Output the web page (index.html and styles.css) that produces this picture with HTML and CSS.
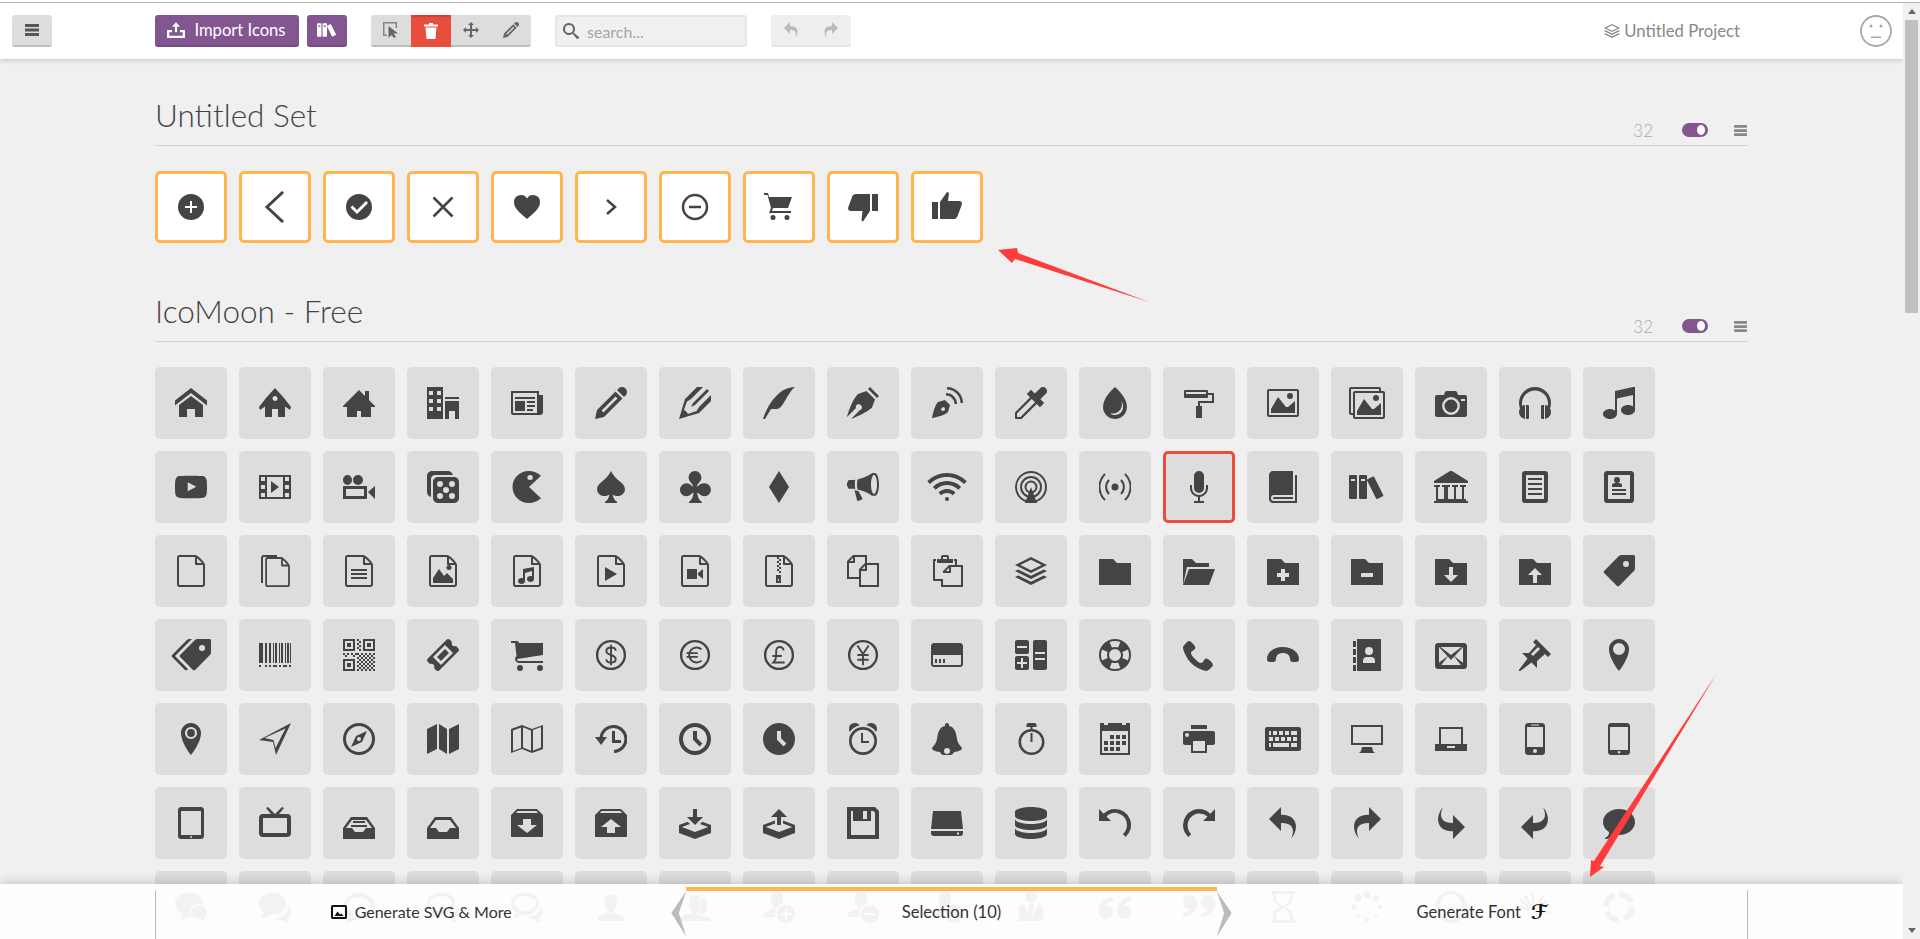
FILE: index.html
```html
<!DOCTYPE html>
<html lang="en">
<head>
<meta charset="utf-8">
<title>IcoMoon App</title>
<link rel="stylesheet" href="styles.css">
</head>
<body>
<svg class="sprite" aria-hidden="true">
<defs>
<path id="fbp" d="M28.7 7.2c-.7-1-1.7-2-2.700-3.100s-2.200-2-3.200-2.800C21.200.1 20.400 0 20 0H4.500C3.100 0 2 1.100 2 2.500v27C2 30.900 3.100 32 4.500 32h23c1.400 0 2.500-1.100 2.500-2.500V10c0-.4-.1-1.200-1.300-2.800zM24.500 5.500c1 1 1.700 1.800 2.300 2.500H22V3.200c.7.600 1.600 1.300 2.500 2.300zM28 29.500c0 .3-.2.500-.5.500h-23c-.3 0-.5-.2-.5-.5v-27c0-.3.2-.5.500-.5H20v7c0 .6.400 1 1 1h7z"/>
<path id="fop" d="M18 8l-4-4H0v26h32V8z"/>
<path id="u2" d="M23.800 32c3.600-6.400 4.200-16.300-9.800-15.900V24L2 12 14 0v7.800C30.700 7.300 32.600 22.500 23.800 32z"/>
<path id="r2" d="M18 7.800V0l12 12-12 12v-7.900C4 15.800 4.600 25.600 8.200 32-.6 22.500 1.300 7.300 18 7.800z"/>
<path id="bu" d="M16 2c8.800 0 16 5.800 16 13s-7.200 13-16 13c-.8 0-1.700 0-2.500-.2C10 31 6 31.800 2 32v-1c2.200-1 4-3 4-5v-1C2.400 22.700 0 19 0 15 0 7.800 7.200 2 16 2z"/>
<path id="ub" d="M12 23c0-4.700 3-8.800 7.200-10.300.5-1.100.8-2.400.8-3.700 0-5 0-9-6-9S8 4 8 9c0 3.100 1.800 6.200 4 7.400v1.700C5.200 18.600 0 22 0 26h12.400c-.3-1-.4-2-.4-3zM23 14a9 9 0 100 18 9 9 0 000-18z"/>
<path id="rg" d="M16 0a16 16 0 100 32 16 16 0 000-32zM16 29.500a13.500 13.500 0 110-27 13.500 13.500 0 010 27z"/>
</defs>

<symbol id="home" viewBox="0 0 32 32"><path d="M32 18.500L16 6 0 18.500v-5L16 1l16 12.400zM28 18v12h-8v-8h-8v8H4V18l12-9z"/></symbol>
<symbol id="home2" viewBox="0 0 32 32"><path d="M16 1L7 11 0 20l1 3 5-3.500V30h7v-8h6v8h7V19.500l5 3.500 1-3-7-9zM16 9a2.500 2.500 0 110 5 2.500 2.500 0 010-5z"/></symbol>
<symbol id="home3" viewBox="0 0 32 32"><path d="M32 19l-6-6V4h-4v5l-6-6L0 19v1h4v10h10v-6h4v6h10V20h4z"/></symbol>
<symbol id="office" viewBox="0 0 32 32"><path d="M0 32h16V0H0zM10 4h4v4h-4zM10 12h4v4h-4zM10 20h4v4h-4zM2 4h4v4H2zM2 12h4v4H2zM2 20h4v4H2zM18 10h14v2H18zM18 32h4v-8h6v8h4V14H18z"/></symbol>
<symbol id="news" viewBox="0 0 32 32"><path d="M28 8V4H0v22c0 1.100.9 2 2 2h27c1.700 0 3-1.300 3-3V8zM26 26H2V6h24zM4 10h20v2H4zM16 14h8v2h-8zM16 18h8v2h-8zM16 22h6v2h-6zM4 14h10v10H4z"/></symbol>
<symbol id="pen1" viewBox="0 0 32 32"><path d="M27 0a5 5 0 015 5c0 1.100-.4 2.200-1 3l-2 2-7-7 2-2c.8-.6 1.900-1 3-1zM2 23L0 32l9-2 18.500-18.500-7-7zM22.400 11.400l-14 14-1.800-1.800 14-14z"/></symbol>
<symbol id="pen2" viewBox="0 0 32 32"><path d="M12 20l4-2L30 4l-2-2-14 14zM9 27.100c-1-2.100-2-3.100-4.100-4.100L8 14.400l4-2.400L24 0h-6L6 12 0 32l20-6 12-12V8L20 20l-2.400 4z"/></symbol>
<symbol id="quill" viewBox="0 0 32 32"><path d="M0 32C4 20 14.500 0 32 0c-8.200 6.600-12 22-18 22H8L2 32z"/></symbol>
<symbol id="pen" viewBox="0 0 32 32"><path d="M23 0l9 9-2 2-9-9zM19.500 4l8.500 8.500-3 8C20 26 4 32 4 32l9-9a3 3 0 10-4-2l-9 9S4 14 11 7z"/></symbol>
<symbol id="blog" viewBox="0 0 32 32"><path d="M1 31S3 19 7 15l7-2 5 5-2 7c-4 4-16 6-16 6zM5 27l5-5a2 2 0 102-2zM16 0v2.500A13.500 13.500 0 0129.500 16H32A16 16 0 0016 0zM15 6v2.500A8.500 8.500 0 0123.500 17H26A11 11 0 0015 6z"/></symbol>
<symbol id="eye" viewBox="0 0 32 32"><path d="M30.800 1.200a4 4 0 00-5.600 0l-5.400 5.400L16 2.800l-4.200 4.200 3.300 3.300L.3 25.100c-.2.200-.3.600-.3.900v5c0 .6.400 1 1 1h5.100c.3 0 .6-.1.800-.3l14.800-14.800 3.300 3.300 4.200-4.200-3.800-3.800 5.400-5.400a4 4 0 000-5.600zM5.400 30H2v-3.400l14.700-14.700 3.400 3.400z"/></symbol>
<symbol id="droplet" viewBox="0 0 32 32"><path d="M27 14.800C25 9 20.600 3.900 16 0 11.400 3.900 7 9 5 14.800c-1.300 3.500-1.400 7.400.4 10.800C7.400 29.500 11.600 32 16 32s8.600-2.500 10.600-6.400c1.800-3.400 1.700-7.300.4-10.800zM23.100 23.700C21.700 26.300 19 28 16 28c-1.700 0-3.400-.6-4.700-1.600 5 .8 9.800-2 11.100-6 .8-2.500.6-5 0-7 1.800 3.400 2.400 7 .7 10.300z"/></symbol>
<symbol id="paint" viewBox="0 0 32 32"><path d="M2 3h22a1 1 0 011 1v2h6v10H17v3h2v12h-6V19h2v-5h14V8h-4v2a1 1 0 01-1 1H2a1 1 0 01-1-1V4a1 1 0 011-1zM3 5v2h20V5z"/></symbol>
<symbol id="image" viewBox="0 0 32 32"><path d="M30 2H2C.9 2 0 2.900 0 4v24c0 1.100.9 2 2 2h28c1.100 0 2-.9 2-2V4c0-1.100-.9-2-2-2zM30 28H2V4h28zM26 9a3 3 0 11-6 0 3 3 0 016 0zM28 26H4v-4l7-12 8 10h2l7-6z"/></symbol>
<symbol id="images" viewBox="0 0 36 32"><path d="M34 4h-2V2c0-1.100-.9-2-2-2H2C.9 0 0 .9 0 2v24c0 1.100.9 2 2 2h2v2c0 1.100.9 2 2 2h28c1.100 0 2-.9 2-2V6c0-1.100-.9-2-2-2zM4 6v20H2V2h28v2H6C4.900 4 4 4.900 4 6zM34 30H6V6h28zM30 11a3 3 0 11-6 0 3 3 0 016 0zM32 28H8v-4l7-12 8 10h2l7-6z"/></symbol>
<symbol id="camera" viewBox="0 0 32 32"><path d="M9.500 19a6.500 6.500 0 1013 0 6.500 6.500 0 00-13 0zM30 8h-7c-.5-2-1-4-3-4h-8c-2 0-2.500 2-3 4H2c-1.100 0-2 .9-2 2v18c0 1.100.9 2 2 2h28c1.100 0 2-.9 2-2V10c0-1.100-.9-2-2-2zM16 27.900a8.900 8.900 0 110-17.800 8.900 8.900 0 010 17.800zM30 14h-4v-2h4z"/></symbol>
<symbol id="phones" viewBox="0 0 32 32"><path d="M9 18H7v14h2c.5 0 1-.5 1-1V19c0-.5-.5-1-1-1zM23 18c-.5 0-1 .5-1 1v12c0 .5.500 1 1 1h2V18zM32 16a16 16 0 00-32 0c0 1.900.3 3.800 1 5.500-.6 1-1 2.200-1 3.500 0 3.500 2.600 6.400 6 6.900V18.100c-1 .1-1.900.5-2.700 1-.2-.8-.3-1.700-.3-2.600a13 13 0 0126 0c0 .9-.1 1.800-.3 2.600-.8-.5-1.700-.9-2.700-1v13.800c3.400-.5 6-3.400 6-6.900 0-1.300-.3-2.500-1-3.500.6-1.700 1-3.600 1-5.500z"/></symbol>
<symbol id="music" viewBox="0 0 32 32"><path d="M30 0h2v23c0 2.800-3.100 5-7 5s-7-2.200-7-5 3.100-5 7-5c2 0 3.700.6 5 1.500V8l-16 3.600V27c0 2.800-3.100 5-7 5s-7-2.200-7-5 3.100-5 7-5c2 0 3.700.6 5 1.500V4z"/></symbol>

<symbol id="play" viewBox="0 0 32 32"><path d="M31.700 9.600s-.3-2.200-1.300-3.200c-1.200-1.300-2.600-1.300-3.200-1.300C22.700 4.700 16 4.700 16 4.700s-6.700 0-11.200.4c-.6 0-2 0-3.200 1.300C.6 7.400.3 9.600.3 9.600S0 12.200 0 14.800v2.400c0 2.600.3 5.200.3 5.200s.3 2.200 1.300 3.200c1.200 1.300 2.800 1.200 3.500 1.400 2.600.2 10.900.3 10.900.3s6.700 0 11.200-.3c.6-.1 2-.1 3.200-1.400 1-1 1.300-3.200 1.300-3.200s.3-2.600.3-5.200v-2.400c0-2.600-.3-5.200-.3-5.200zM12.700 20.200v-9l8.600 4.500z"/></symbol>
<symbol id="film" viewBox="0 0 32 32"><path d="M0 4v24h32V4zM6 26H2v-4h4zM6 18H2v-4h4zM6 10H2V6h4zM24 26H8V6h16zM30 26h-4v-4h4zM30 18h-4v-4h4zM30 10h-4V6h4zM12 10v12l8-6z"/></symbol>
<symbol id="video" viewBox="0 0 32 32"><path d="M4.500 4a4.500 5 0 110 10 4.500 5 0 010-10zM15 4a5 5 0 110 10 5 5 0 010-10zM0 15h24v13H0zM3 18v7h18v-7zM25 21l7-6v13z"/></symbol>
<symbol id="dice" viewBox="0 0 32 32"><path d="M27 6H11c-2.800 0-5 2.200-5 5v16c0 2.800 2.200 5 5 5h16c2.800 0 5-2.200 5-5V11c0-2.800-2.200-5-5-5zM13 28a3 3 0 110-6 3 3 0 010 6zM13 16a3 3 0 110-6 3 3 0 010 6zM19 22a3 3 0 110-6 3 3 0 010 6zM25 28a3 3 0 110-6 3 3 0 010 6zM25 16a3 3 0 110-6 3 3 0 010 6zM25.900 4c-.5-2.300-2.500-4-4.900-4H5C2.200 0 0 2.200 0 5v16c0 2.400 1.700 4.400 4 4.900V8c0-2.200 1.800-4 4-4z"/></symbol>
<symbol id="pac" viewBox="0 0 32 32"><path transform="translate(1.500) scale(1.100 1)" d="M25.900 4.700C23 1.800 19 0 14.700 0 6.600 0 0 7.200 0 16s6.600 16 14.700 16c4.300 0 8.300-1.800 11.200-4.700L15 16zM16 4a2.500 2.500 0 110 5 2.500 2.500 0 010-5z"/></symbol>
<symbol id="spade" viewBox="0 0 32 32"><path d="M25.500 10.900C19.500 6.400 17.400 2.800 16 0c-1.400 2.800-3.500 6.400-9.500 10.900-10.300 7.700-.6 18.400 7.900 12.500-.5 3.600-2.400 6.300-4.400 7.400V32h12v-1.200c-1.900-1.100-3.800-3.800-4.400-7.400 8.500 5.900 18.200-4.800 7.900-12.500z"/></symbol>
<symbol id="club" viewBox="0 0 32 32"><path d="M24.600 12.300c-1.800 0-3.500.8-4.700 2-.5.500-1.400 1.200-2.300 1.700.4-1.700 1.800-3.800 2.800-4.700 1.200-1.200 2-2.900 2-4.700C22.400 2.900 19.500 0 16 0s-6.400 2.900-6.400 6.500c0 1.900.8 3.500 2 4.700 1 .9 2.400 3.100 2.800 4.700-.9-.5-1.800-1.200-2.300-1.700-1.200-1.300-2.900-2-4.700-2C3.800 12.300 1 15.200 1 18.800s2.800 6.500 6.400 6.500c1.800 0 3.500-.8 4.700-2 .5-.6 1.500-1.300 2.400-1.800-.1 4.600-2.300 8-4.500 9.300V32h12.800v-1.200c-2.200-1.300-4.400-4.700-4.500-9.300 1 .6 1.900 1.300 2.400 1.800 1.200 1.300 2.900 2 4.700 2 3.600 0 6.500-2.900 6.500-6.500s-2.900-6.500-6.500-6.500z"/></symbol>
<symbol id="diamond" viewBox="0 0 32 32"><path d="M16 0L6 16l10 16 10-16z"/></symbol>
<symbol id="horn" viewBox="0 0 32 32"><path d="M27.900 2h-2.600S19.200 6.600 10.500 8.400C10.200 9.800 10 11.500 10 13.400s.2 3.600.5 5c8.700 1.800 14.800 6.400 14.800 6.400h2.600c2.300 0 4.100-5.100 4.100-11.400S30.200 2 27.900 2zM27 23.100c-.3 0-.6-.3-.8-.5-.4-.4-.8-1.100-1.100-2-.7-1.900-1.100-4.500-1.100-7.200s.4-5.300 1.100-7.200c.3-.9.700-1.500 1.100-2 .2-.2.500-.5.800-.5s.6.300.8.500c.4.400.8 1.100 1.100 2 .7 1.900 1.100 4.500 1.100 7.200s-.4 5.300-1.100 7.200c-.3.900-.7 1.500-1.100 2-.2.200-.5.500-.8.500zM7.900 13.400c0-1.600.1-3.200.3-4.700-1.500.2-2.800.4-4.400.4H1.700L0 12v2.800l1.700 3h2.100c1.600 0 2.900.1 4.400.3-.2-1.500-.3-3-.3-4.700zM11.500 20.100l-4-.8 2.600 10c.1.500.6.800 1.100.6l3.700-1.500c.5-.2.700-.7.400-1.200z"/></symbol>
<symbol id="wifi" viewBox="0 0 40 32"><path d="M20 18c3.300 0 6.300 1.300 8.500 3.500l-2.800 2.800c-1.400-1.400-3.400-2.300-5.700-2.300s-4.200.9-5.700 2.300l-2.800-2.800c2.200-2.200 5.200-3.500 8.500-3.500zM5.900 15.900C9.600 12.100 14.700 10 20 10s10.400 2.100 14.100 5.900l-2.800 2.800C28.300 15.700 24.300 14 20 14s-8.300 1.700-11.300 4.700zM30.900 4.200c3.300 1.400 6.300 3.400 8.900 6l-2.800 2.800C32.400 8.500 26.400 6 20 6S7.600 8.500 3 13L.2 10.200c2.600-2.600 5.600-4.600 8.900-6C12.600 2.700 16.200 2 20 2s7.400.7 10.900 2.200zM18 28a2 2 0 114 0 2 2 0 01-4 0z"/></symbol>
<symbol id="pod" viewBox="0 0 32 32"><g fill="none" stroke="currentColor" stroke-width="2"><circle cx="16" cy="16" r="15"/><circle cx="16" cy="16" r="10"/><circle cx="16" cy="16" r="5.500"/></g><path d="M16 16l-6 16h12z"/></symbol>
<symbol id="feed" viewBox="0 0 32 32"><circle cx="16" cy="16" r="3.500"/><path fill="none" stroke="currentColor" stroke-width="2" d="M10 9a10 10 0 000 14M22 9a10 10 0 010 14M6 3a18 18 0 000 26M26 3a18 18 0 010 26"/></symbol>
<symbol id="mic" viewBox="0 0 32 32"><path transform="translate(1)" d="M15 22a5 5 0 005-5V5a5 5 0 00-10 0v12a5 5 0 005 5zM22 14v3a7 7 0 01-14 0v-3H6v3c0 4.600 3.500 8.400 8 8.900V30h-4v2h10v-2h-4v-4.100c4.500-.5 8-4.300 8-8.900v-3z"/></symbol>
<symbol id="book" viewBox="0 0 32 32"><path d="M28 4v26H7a3 3 0 010-6h19V0H6C3.800 0 2 1.800 2 4v24c0 2.200 1.800 4 4 4h24V4zM7 26a1 1 0 000 2h19v-2z"/></symbol>
<symbol id="books" viewBox="0 0 36 32"><path d="M7 4H1c-.5 0-1 .5-1 1v22c0 .5.5 1 1 1h6c.5 0 1-.5 1-1V5c0-.5-.5-1-1-1zM6 10H2V8h4zM17 4h-6c-.5 0-1 .5-1 1v22c0 .5.500 1 1 1h6c.5 0 1-.5 1-1V5c0-.5-.5-1-1-1zM16 10h-4V8h4zM23.900 5.500l-5.400 2.700c-.5.300-.7.900-.4 1.400l9 17.900c.3.500.9.700 1.300.4l5.400-2.700c.5-.2.700-.9.400-1.300l-9-17.900c-.2-.5-.8-.7-1.300-.5z"/></symbol>
<symbol id="lib" viewBox="0 0 34 32"><path d="M32 30v-2h-2V16h2v-2h-6v2h2v12h-6V16h2v-2h-6v2h2v12h-6V16h2v-2H8v2h2v12H4V16h2v-2H0v2h2v12H2v2H0v2h34v-2zM16 0h2l16 10v2H0v-2z"/></symbol>
<symbol id="ftext" viewBox="0 0 32 32"><path d="M6 0h20a3 3 0 013 3v26a3 3 0 01-3 3H6a3 3 0 01-3-3V3a3 3 0 013-3zM7 4v24h18V4zM9 7h14v2H9zM9 12h14v2H9zM9 17h14v2H9zM9 22h14v2H9z"/></symbol>
<symbol id="profile" viewBox="0 0 32 32"><path transform="translate(1)" d="M27 0H3C1.400 0 0 1.400 0 3v26c0 1.700 1.400 3 3 3h24c1.700 0 3-1.300 3-3V3c0-1.600-1.300-3-3-3zM26 28H4V4h22zM8 18h14v2H8zM8 22h14v2H8zM10 9a3 3 0 116 0 3 3 0 01-6 0zM15 12h-4c-1.700 0-3 .9-3 2v2h10v-2c0-1.100-1.400-2-3-2z"/></symbol>

<symbol id="fe" viewBox="0 0 32 32"><use href="#fbp"/></symbol>
<symbol id="fes" viewBox="0 0 32 32"><use href="#fbp" transform="translate(4.500 2) scale(.88 .94)"/><path d="M2 28V3a3 3 0 013-3h13v2H5a1 1 0 00-1 1v25z"/></symbol>
<symbol id="ft" viewBox="0 0 32 32"><use href="#fbp"/><path d="M8 14h16v2H8zM8 18h16v2H8zM8 22h16v2H8z"/></symbol>
<symbol id="fp" viewBox="0 0 32 32"><use href="#fbp"/><path d="M6 28v-5l6-9 5 7 3-3 6 6v4zM22 10a2.500 2.500 0 110 5 2.500 2.500 0 010-5z"/></symbol>
<symbol id="fm" viewBox="0 0 32 32"><use href="#fbp"/><path d="M23 12v12c0 1.700-1.500 3-3.500 3S16 25.700 16 24s1.500-3 3.500-3c.5 0 1 .1 1.500.2V16l-7 2v8c0 1.700-1.500 3-3.500 3S7 27.700 7 26s1.500-3 3.500-3c.5 0 1 .1 1.500.2V14z"/></symbol>
<symbol id="fpl" viewBox="0 0 32 32"><use href="#fbp"/><path d="M10 12l12 7-12 7z"/></symbol>
<symbol id="fv" viewBox="0 0 32 32"><use href="#fbp"/><path d="M8 14h10v10H8zM19 18l5-4v10l-5-4z"/></symbol>
<symbol id="fz" viewBox="0 0 32 32"><use href="#fbp"/><path d="M14 2h2v2h-2zM16 4h2v2h-2zM14 6h2v2h-2zM16 8h2v2h-2zM14 10h2v2h-2zM16 12h2v2h-2zM14 14h2v2h-2zM16 16h2v2h-2zM13 20h5v8h-5zM15 24v2h1v-2z"/></symbol>
<symbol id="copy" viewBox="0 0 32 32"><path d="M20 8V0H6L0 6v18h12v8h20V8zM6 2.800V6H2.800zM2 22V8h6V2h10v6l-6 6v8zM18 10.800V14h-3.200zM30 30H14V16h6v-6h10z"/></symbol>
<symbol id="paste" viewBox="0 0 32 32"><path d="M22 4h-4V2c0-1.100-.9-2-2-2h-4c-1.100 0-2 .9-2 2v2H6v4h16zM16 4h-4V2h4zM26 10V5c0-.5-.5-1-1-1h-2v2h1v4h-6l-6 6v8H4V6h1V4H3c-.5 0-1 .5-1 1v20c0 .5.500 1 1 1h7v6h22V10zM18 12.800V16h-3.200zM30 30H12V18h8v-6h10z"/></symbol>
<symbol id="stack" viewBox="0 0 32 32"><path d="M32 10L16 2 0 10l16 8zM16 4.700L26.700 10 16 15.300 5.300 10zM28.800 14.400L32 16l-16 8L0 16l3.200-1.600L16 20.800zM28.800 20.400L32 22l-16 8L0 22l3.200-1.600L16 26.800z"/></symbol>
<symbol id="fo" viewBox="0 0 32 32"><path d="M14 4l4 4h14v22H0V4z"/></symbol>
<symbol id="foo" viewBox="0 0 32 32"><path d="M26 30l6-16H6L0 30zM4 12L0 30V4h9l4 4h13v4z"/></symbol>
<symbol id="fop2" viewBox="0 0 32 32"><use href="#fop"/><path fill="#ddd" d="M22 22h-4v4h-4v-4h-4v-4h4v-4h4v4h4z"/></symbol>
<symbol id="fom" viewBox="0 0 32 32"><use href="#fop"/><path fill="#ddd" d="M22 22H10v-4h12z"/></symbol>
<symbol id="fod" viewBox="0 0 32 32"><use href="#fop"/><path fill="#ddd" d="M16 27l-7-7h5v-8h4v8h5z"/></symbol>
<symbol id="fou" viewBox="0 0 32 32"><use href="#fop"/><path fill="#ddd" d="M16 13l7 7h-5v8h-4v-8H9z"/></symbol>
<symbol id="tag" viewBox="0 0 32 32"><path d="M30.500 0h-12c-.8 0-2 .5-2.600 1.100L1.100 15.900c-.6.600-.6 1.500 0 2.100L14 30.900c.6.600 1.500.6 2.100 0l14.800-14.800c.6-.6 1.100-1.700 1.100-2.600v-12c0-.8-.7-1.500-1.500-1.500zM23 12a3 3 0 110-6 3 3 0 010 6z"/></symbol>

<symbol id="tags" viewBox="0 0 40 32"><path d="M38.500 0h-12c-.8 0-2 .5-2.600 1.100L9.100 15.900c-.6.600-.6 1.500 0 2.100L22 30.900c.6.600 1.500.6 2.100 0l14.800-14.800c.6-.6 1.100-1.700 1.100-2.600v-12c0-.8-.7-1.500-1.500-1.500zM31 12a3 3 0 110-6 3 3 0 010 6zM4 17L21 0h-2.500c-.8 0-2 .5-2.600 1.100L1.100 15.900c-.6.600-.6 1.500 0 2.100L14 30.900c.6.600 1.500.6 2.100 0l.9-.9z"/></symbol>
<symbol id="bar" viewBox="0 0 32 32"><path d="M0 4h4v20H0zM6 4h2v20H6zM10 4h2v20h-2zM14 4h1v20h-1zM16 4h2v20h-2zM20 4h1v20h-1zM22 4h2v20h-2zM26 4h1v20h-1zM28 4h2v20h-2zM31 4h1v20h-1zM0 26h2v2H0zM6 26h2v2H6zM10 26h2v2h-2zM14 26h4v2h-4zM20 26h2v2h-2zM24 26h4v2h-4zM30 26h2v2h-2z"/></symbol>
<symbol id="qrc" viewBox="0 0 32 32"><path d="M0 0h12v12H0zM2 2v8h8V2zM4 4h4v4H4zM20 0h12v12H20zM22 2v8h8V2zM24 4h4v4h-4zM0 20h12v12H0zM2 22v8h8v-8zM4 24h4v4H4zM14 0h2v2h-2zM16 2h2v2h-2zM14 4h2v2h-2zM16 6h2v2h-2zM14 8h2v2h-2zM16 10h2v2h-2zM14 14h2v2h-2zM14 18h2v2h-2zM16 16h2v2h-2zM16 20h2v2h-2zM14 22h2v2h-2zM16 24h2v2h-2zM14 26h2v2h-2zM16 28h2v2h-2zM14 30h2v2h-2zM0 14h2v2H0zM2 16h2v2H2zM4 14h2v2H4zM8 14h2v2H8zM10 16h2v2h-2zM12 14h2v2h-2zM18 14h2v2h-2zM20 16h2v2h-2zM22 14h2v2h-2zM24 16h2v2h-2zM26 14h2v2h-2zM28 16h2v2h-2zM30 14h2v2h-2zM18 18h2v2h-2zM22 18h2v2h-2zM26 18h2v2h-2zM30 18h2v2h-2zM20 20h2v2h-2zM24 20h2v2h-2zM28 20h2v2h-2zM18 22h2v2h-2zM22 22h2v2h-2zM26 22h2v2h-2zM30 22h2v2h-2zM20 24h2v2h-2zM24 24h2v2h-2zM28 24h2v2h-2zM18 26h2v2h-2zM22 26h2v2h-2zM26 26h2v2h-2zM30 26h2v2h-2zM20 28h2v2h-2zM24 28h2v2h-2zM28 28h2v2h-2zM18 30h2v2h-2zM22 30h2v2h-2zM26 30h2v2h-2zM30 30h2v2h-2z"/></symbol>
<symbol id="ticket" viewBox="0 0 32 32"><path d="M18 10l4 4-8 8-4-4zM31.400 9.400L29 7a3 3 0 01-4-4L22.600.6c-.8-.8-2-.8-2.800 0L.6 19.800c-.8.800-.8 2 0 2.800L3 25a3 3 0 014 4l2.400 2.400c.8.800 2 .8 2.800 0l19.200-19.200c.8-.8.8-2 0-2.800zM14 26l-8-8L18 6l8 8z"/></symbol>
<symbol id="cart" viewBox="0 0 32 32"><path d="M12 29a3 3 0 11-6 0 3 3 0 016 0zM32 29a3 3 0 11-6 0 3 3 0 016 0zM32 16V4H8c0-1.100-.9-2-2-2H0v2h4l1.500 12.900A4 4 0 008 24h24v-2H8a2 2 0 01-2-2z"/></symbol>
<symbol id="cd" viewBox="-1 -1 34 34"><use href="#rg"/><path fill="none" stroke="currentColor" stroke-width="2" d="M21 11.500C21 9.500 19 8 16 8s-5 1.500-5 4 2 3 5 4 5 2 5 4.500-2 3.500-5 3.500-5-1.500-5-3.500M16 5v22"/></symbol>
<symbol id="ce" viewBox="-1 -1 34 34"><use href="#rg"/><path fill="none" stroke="currentColor" stroke-width="2" d="M23 10a8 8 0 100 12M7 14h12M7 18h12"/></symbol>
<symbol id="cp" viewBox="-1 -1 34 34"><use href="#rg"/><path fill="none" stroke="currentColor" stroke-width="2" d="M22 24H10c2-2 3-4 3-7v-5a4 4 0 018-1M9 17h10"/></symbol>
<symbol id="cy" viewBox="-1 -1 34 34"><use href="#rg"/><path fill="none" stroke="currentColor" stroke-width="2" d="M10 6l6 9 6-9M16 15v12M10 16h12M10 21h12"/></symbol>
<symbol id="card" viewBox="0 0 32 32"><path d="M29 4H3C1.400 4 0 5.400 0 7v18c0 1.700 1.400 3 3 3h26c1.700 0 3-1.300 3-3V7c0-1.600-1.300-3-3-3zM2 16h28v9c0 .5-.5 1-1 1H3c-.5 0-1-.5-1-1zM4 20h2v4H4zM8 20h2v4H8zM12 20h2v4h-2z"/></symbol>
<symbol id="calc" viewBox="0 0 32 32"><path transform="translate(0 1)" d="M12 0H2C.9 0 0 .9 0 2v10c0 1.100.9 2 2 2h10c1.100 0 2-.9 2-2V2c0-1.100-.9-2-2-2zM12 8H2V6h10zM30 0H20c-1.100 0-2 .9-2 2v26c0 1.100.9 2 2 2h10c1.100 0 2-.9 2-2V2c0-1.100-.9-2-2-2zM30 20H20v-2h10zM30 14H20v-2h10zM12 16H2c-1.100 0-2 .9-2 2v10c0 1.100.9 2 2 2h10c1.100 0 2-.9 2-2V18c0-1.100-.9-2-2-2zM12 24H8v4H6v-4H2v-2h4v-4h2v4h4z"/></symbol>
<symbol id="life" viewBox="0 0 32 32"><path d="M16 0a16 16 0 100 32 16 16 0 000-32zM10 16a6 6 0 1112 0 6 6 0 01-12 0zM28.900 21.400l-5.500-2.300c.4-1 .6-2 .6-3.100s-.2-2.100-.6-3.100l5.500-2.300a14 14 0 010 10.800zM21.400 3.100l-2.300 5.500c-1-.4-2-.6-3.100-.6s-2.100.2-3.100.6l-2.300-5.500a14 14 0 0110.800 0zM3.100 10.600l5.500 2.300c-.4 1-.6 2-.6 3.100s.2 2.100.6 3.100l-5.500 2.300a14 14 0 010-10.800zM10.600 28.900l2.300-5.500c1 .4 2 .6 3.100.6s2.100-.2 3.100-.6l2.300 5.500a14 14 0 01-10.800 0z"/></symbol>
<symbol id="phone" viewBox="0 0 32 32"><path d="M22 20c-2 2-2 4-4 4s-4-2-6-4-4-4-4-6 2-2 4-4-4-8-6-8-6 6-6 6c0 4 4.100 12.100 8 16s12 8 16 8c0 0 6-4 6-6s-6-8-8-6z"/></symbol>
<symbol id="hang" viewBox="0 0 32 32"><path d="M16 8C7 8 0 13 0 20c0 2 1 3 3 3h3c2 0 3-1 3-3 0-4 3-6 7-6s7 2 7 6c0 2 1 3 3 3h3c2 0 3-1 3-3 0-7-7-12-16-12z"/></symbol>
<symbol id="addr" viewBox="0 0 32 32"><path d="M6 0v32h24V0zM18 8a4 4 0 110 8 4 4 0 010-8zM24 24H12v-2a4 4 0 014-4h4a4 4 0 014 4zM2 2h3v6H2zM2 10h3v6H2zM2 18h3v6H2zM2 26h3v6H2z"/></symbol>
<symbol id="env" viewBox="0 0 32 32"><path d="M29 4H3C1.400 4 0 5.400 0 7v20c0 1.700 1.400 3 3 3h26c1.700 0 3-1.300 3-3V7c0-1.600-1.300-3-3-3zM12.500 17.200L4 23.800V8.100zM5.500 8h21L16 15.900zM12.800 17.600L16 21l3.200-3.400 6.600 8.400H6.200zM19.500 17.200L28 8.100v15.700z"/></symbol>
<symbol id="pin" viewBox="0 0 32 32"><path d="M17 0l-3 3 3 3-7 8H3l5.500 5.500L0 30.800V32h1.200l11.300-8.500L18 29v-7l8-7 3 3 3-3zM14 17l-2-2 7-7 2 2z"/></symbol>
<symbol id="loc" viewBox="0 0 32 32"><path d="M16 0C10.500 0 6 4.500 6 10c0 10 10 22 10 22s10-12 10-22c0-5.500-4.500-10-10-10zM16 16a6 6 0 110-12 6 6 0 010 12z"/></symbol>

<symbol id="loc2" viewBox="0 0 32 32"><path d="M16 0C10.500 0 6 4.500 6 10c0 10 10 22 10 22s10-12 10-22c0-5.500-4.500-10-10-10zM16 16.100a6.100 6.100 0 110-12.200 6.100 6.100 0 010 12.200zM12.100 10a3.900 3.900 0 117.800 0 3.900 3.900 0 01-7.800 0z"/></symbol>
<symbol id="nav" viewBox="0 0 32 32"><path d="M32 0L0 17l14 2 3 13zM26.500 5.500L16.500 25l-2-8-9-2z"/></symbol>
<symbol id="comp" viewBox="0 0 32 32"><path d="M16 0a16 16 0 100 32 16 16 0 000-32zM16 29a13 13 0 110-26 13 13 0 010 26zM24 8l-11 5-5 11 11-5zM16 14a2 2 0 110 4 2 2 0 010-4z"/></symbol>
<symbol id="map" viewBox="0 0 32 32"><path d="M0 6l10-5v25L0 31zM12 1l8 5v25l-8-5zM22 6l10-5v25l-10 5z"/></symbol>
<symbol id="map2" viewBox="0 0 32 32"><path d="M21 6L11 2 0 6v24l11-4 10 4 11-4V2zM12 4.200l8 3.200v20.400l-8-3.200zM2 7.400l8-2.900V25l-8 2.900zM30 24.600l-8 2.900V7l8-2.900z"/></symbol>
<symbol id="hist" viewBox="0 0 32 32"><path d="M0 14h12l-6 8z"/><path fill="none" stroke="currentColor" stroke-width="3" d="M6 15A12.500 12.500 0 1 1 19 28.500"/><path d="M17 8h3v9h6v3h-9z"/></symbol>
<symbol id="clock" viewBox="0 0 32 32"><path d="M20.600 23.400L14 16.800V8h4v7.200l5.400 5.400zM16 0a16 16 0 100 32 16 16 0 000-32zM16 28a12 12 0 110-24 12 12 0 010 24z"/></symbol>
<symbol id="clock2" viewBox="0 0 32 32"><path d="M16 0a16 16 0 100 32 16 16 0 000-32zM20.600 23.400L14 16.800V8h4v7.200l5.400 5.400z"/></symbol>
<symbol id="alarm" viewBox="0 0 32 32"><path d="M16 4a14 14 0 100 28 14 14 0 000-28zM16 29.300a11.300 11.300 0 110-22.600 11.300 11.300 0 010 22.600zM29.200 9c.5-.9.800-1.900.8-3a6 6 0 00-10.700-3.700c4.100.9 7.600 3.300 9.900 6.700zM12.700 2.300A6 6 0 002 6c0 1.100.3 2.100.8 3 2.300-3.400 5.800-5.800 9.900-6.700zM16 18v-8h-2v10h8v-2z"/></symbol>
<symbol id="bell" viewBox="0 0 32 32"><path d="M16 0c-1.500 0-2 1-2 2v1c-5 1-7 5-8 13-.5 4-3 6-5 9 0 2 3 3.500 8 4a7 3.500 0 0014 0c5-.5 8-2 8-4-2-3-4.500-5-5-9-1-8-3-12-8-13V2c0-1-.5-2-2-2zM16 25a3 3 0 110 6 3 3 0 010-6z"/></symbol>
<symbol id="watch" viewBox="0 0 32 32"><path transform="translate(1.500)" d="M16 6V4h4V2c0-1.100-.9-2-2-2h-6c-1.100 0-2 .9-2 2v2h4v2C7.300 6.500 2 12.100 2 19a13 13 0 0026 0C28 12.100 22.700 6.500 16 6zM15 29.500a10.500 10.500 0 110-21 10.500 10.500 0 010 21zM14 10h2v9h-2z"/></symbol>
<symbol id="cal" viewBox="0 0 32 32"><path transform="translate(1)" d="M10 12h4v4h-4zM16 12h4v4h-4zM22 12h4v4h-4zM4 24h4v4H4zM10 24h4v4h-4zM16 24h4v4h-4zM10 18h4v4h-4zM16 18h4v4h-4zM22 18h4v4h-4zM4 18h4v4H4zM26 0v2h-4V0H8v2H4V0H0v32h30V0zM28 30H2V8h26z"/></symbol>
<symbol id="print" viewBox="0 0 32 32"><path d="M8 2h16v4H8zM30 8H2c-1.100 0-2 .9-2 2v10c0 1.100.9 2 2 2h6v8h16v-8h6c1.100 0 2-.9 2-2V10c0-1.100-.9-2-2-2zM4 14a2 2 0 110-4 2 2 0 010 4zM22 28H10V18h12z"/></symbol>
<symbol id="kb" viewBox="0 0 36 32"><path d="M34 4H2C.9 4 0 4.900 0 6v20c0 1.100.9 2 2 2h32c1.100 0 2-.9 2-2V6c0-1.100-.9-2-2-2zM20 8h4v4h-4zM26 14v4h-4v-4zM14 8h4v4h-4zM20 14v4h-4v-4zM8 8h4v4H8zM14 14v4h-4v-4zM4 8h2v4H4zM4 14h4v4H4zM6 24H4v-4h2zM24 24H8v-4h16zM32 24h-6v-4h6zM32 18h-4v-4h4zM32 12h-6V8h6z"/></symbol>
<symbol id="disp" viewBox="0 0 32 32"><path d="M0 2v20h32V2zM30 20H2V4h28zM21 24H11l-1 4-2 2h16l-2-2z"/></symbol>
<symbol id="lap" viewBox="0 0 32 32"><path d="M4 4h24v17h4v7H0v-7h4zM6 6v15h20V6zM12 23v2h8v-2z"/></symbol>
<symbol id="mob" viewBox="0 0 32 32"><path d="M23 0H9C7.400 0 6 1.400 6 3v26c0 1.700 1.400 3 3 3h14c1.700 0 3-1.300 3-3V3c0-1.600-1.300-3-3-3zM12 1.500h8v1h-8zM16 30a2 2 0 110-4 2 2 0 010 4zM24 24H8V4h16z"/></symbol>
<symbol id="mob2" viewBox="0 0 32 32"><path d="M24 0H8C6.400 0 5 1.400 5 3v26c0 1.700 1.400 3 3 3h16c1.700 0 3-1.300 3-3V3c0-1.600-1.300-3-3-3zM16 30.500a1.300 1.300 0 110-2.600 1.300 1.300 0 010 2.600zM25 27H7V4h18z"/></symbol>

<symbol id="tab" viewBox="0 0 32 32"><path transform="translate(1)" d="M25 0H5C3.400 0 2 1.400 2 3v26c0 1.700 1.400 3 3 3h20c1.700 0 3-1.300 3-3V3c0-1.600-1.300-3-3-3zM15 31a1 1 0 110-2 1 1 0 010 2zM25 28H5V4h20z"/></symbol>
<symbol id="tv" viewBox="0 0 32 32"><path d="M7 1l2-1 7 7 7-7 2 1-5 6h8a4 4 0 014 4v15a4 4 0 01-4 4H4a4 4 0 01-4-4V11a4 4 0 014-4h8zM4 11v15h24V11z"/></symbol>
<symbol id="dr" viewBox="0 0 32 32"><path d="M8 10h16l8 11v11H0V21zM3 21h6l3 4h8l3-4h6l-6-8H9zM10 14h12v2H10zM8 18h16v2H8z"/></symbol>
<symbol id="dr2" viewBox="0 0 32 32"><path d="M8 10h16l8 11v11H0V21zM3 21h6l3 4h8l3-4h6l-6-8H9z"/></symbol>
<symbol id="ba" viewBox="0 0 32 32"><path d="M26 2H6L0 8v21c0 .6.400 1 1 1h30c.6 0 1-.4 1-1V8zM16 26L6 18h6v-6h8v6h6zM4.800 6l2-2h18.400l2 2z"/></symbol>
<symbol id="br" viewBox="0 0 32 32"><path d="M26 2H6L0 8v21c0 .6.400 1 1 1h30c.6 0 1-.4 1-1V8zM20 20v6h-8v-6H6l10-8 10 8zM4.800 6l2-2h18.400l2 2z"/></symbol>
<symbol id="dl" viewBox="0 0 32 32"><path d="M16 18l8-8h-6V2h-4v8H8zM23.300 14.700L21 17l8.100 3L16 24.900 2.800 20 11 17l-2.300-2.300L0 18v8l16 6 16-6v-8z"/></symbol>
<symbol id="ul" viewBox="0 0 32 32"><path d="M14 18h4v-8h6l-8-8-8 8h6zM20 13.500v3.100l9.200 3.400L16 24.900 2.800 20l9.200-3.400v-3.100L0 18v8l16 6 16-6v-8z"/></symbol>
<symbol id="fl" viewBox="0 0 32 32"><path d="M28 0H0v32h32V4zM16 4h4v8h-4zM28 28H4V4h2v10h18V4h2.300L28 5.700z"/></symbol>
<symbol id="drive" viewBox="0 0 32 32"><path d="M2 4h28l2 18H0zM0 24h32v2a3 3 0 01-3 3H3a3 3 0 01-3-3zM26 25.500h2v2h-2z"/></symbol>
<symbol id="db" viewBox="0 0 32 32"><path d="M16 0C7.200 0 0 2.200 0 5v4c0 2.800 7.200 5 16 5s16-2.200 16-5V5c0-2.800-7.200-5-16-5zM16 17C7.200 17 0 14.800 0 12v6c0 2.800 7.200 5 16 5s16-2.200 16-5v-6c0 2.800-7.200 5-16 5zM16 26C7.200 26 0 23.800 0 21v6c0 2.800 7.200 5 16 5s16-2.200 16-5v-6c0 2.800-7.200 5-16 5z"/></symbol>
<symbol id="un" viewBox="0 0 32 32"><path d="M16 2C11.600 2 7.600 3.800 4.700 6.700L0 2v12h12L7.500 9.500A12 12 0 0128 18c0 3.600-1.600 6.800-4.100 9l2.700 3A16 16 0 0016 2z"/></symbol>
<symbol id="re" viewBox="0 0 32 32"><path d="M0 18c0 4.800 2.100 9.100 5.400 12l2.700-3A12 12 0 0124.500 9.500L20 14h12V2l-4.700 4.700A16 16 0 000 18z"/></symbol>
<symbol id="un2" viewBox="0 0 32 32"><use href="#u2"/></symbol>
<symbol id="re2" viewBox="0 0 32 32"><use href="#r2"/></symbol>
<symbol id="fw" viewBox="0 0 32 32"><use href="#r2" transform="matrix(1 0 0 -1 0 32)"/></symbol>
<symbol id="rep" viewBox="0 0 32 32"><use href="#u2" transform="matrix(1 0 0 -1 0 32)"/></symbol>
<symbol id="bub" viewBox="0 0 32 32"><use href="#bu"/></symbol>

<symbol id="bs" viewBox="0 0 32 32"><path d="M14 2c7.700 0 14 4.500 14 10 0 .5 0 1-.1 1.500C26.500 13.200 25 13 24 13c-5 0-9 3.500-9 8 0 1.500.4 3 1.300 4.300-.8.100-1.500.200-2.300.200-2 1.500-6 3-9 3 2-1.500 3-3 3-5C3 21.500 0 17 0 12 0 6.500 6.300 2 14 2zM24 15c4.400 0 8 2.700 8 6 0 2-1 3.700-3 4.800 0 1.700.8 3 2 4.200-2.500 0-5-1-6.500-3-5 .5-8.500-2.500-8.500-6 0-3.300 3.600-6 8-6z"/></symbol>
<symbol id="bs2" viewBox="0 0 32 32"><use href="#bu" transform="scale(.85)"/><path d="M29 14c2 2 3 4 3 7s-2 5-4 6.500c0 1.500.5 2.500 2 4.500-3 0-5-1-7-3-2 0-5 0-8-2 8 0 15-5 14-13z"/></symbol>
<symbol id="b2" viewBox="0 0 32 32"><path d="M16 2c8.800 0 16 5.800 16 13s-7.200 13-16 13c-.8 0-1.700 0-2.500-.2C10 31 6 31.800 2 32v-1c2.200-1 4-3 4-5v-1C2.400 22.700 0 19 0 15 0 7.800 7.200 2 16 2zM16 6C9.400 6 4 10 4 15c0 3 2 6 6 8v4c2-1 3.500-2 4.500-3.200.5.200 1 .2 1.500.2 6.600 0 12-4 12-9s-5.400-9-12-9z"/></symbol>
<symbol id="bs3" viewBox="0 0 32 32"><path id="bs3p" d="M14 2C6.300 2 0 6.500 0 12c0 4 2 7 5 9 0 2.500-1 4-3 5.500 3 0 6-1 8-3 1.500.3 2.500.5 4 .5 7.700 0 14-5 14-12S21.700 2 14 2zM14 5c6 0 11 3.200 11 7s-5 8-11 8c-1.500 0-3-.3-4-.7-1 .9-2 1.300-2 1.300v-3c-3-1.500-5-3.500-5-5.600C3 8.200 8 5 14 5zM29.500 14c1.500 1.500 2.500 3.500 2.500 6 0 3-1.500 5-4 6.500 0 1.500.5 3 2 4.500-3 0-5-1-7-3-2.500 0-5-.5-7-2 7 .500 14-4 13.500-12z"/></symbol>
<symbol id="bs4" viewBox="0 0 32 32"><use href="#bs3p"/></symbol>
<symbol id="u" viewBox="0 0 32 32"><path d="M18 22.100v-1.700c2.200-1.200 4-4.300 4-7.400 0-5 0-9-6-9s-6 4-6 9c0 3.100 1.800 6.200 4 7.400v1.700C7.200 22.600 2 26 2 30h28c0-4-5.200-7.400-12-7.900z"/></symbol>
<symbol id="us" viewBox="0 0 32 32"><path d="M24 24.600v-1.600c2.200-1.200 4-4.300 4-7.400 0-5 0-9-6-9-1 0-2 .1-2.700.4C21 9 21 12 21 15c0 3.500-1 6.500-3 8.400 5 1 10 3 11 6.600h3c0-2.500-3-4.700-8-5.400zM18 22.100v-1.700c2.200-1.200 4-4.300 4-7.400 0-5 0-9-6-9s-6 4-6 9c0 3.100 1.800 6.200 4 7.400v1.700C7.200 22.600 0 26 0 30h28c0-4-3.200-7.400-10-7.900z"/></symbol>
<symbol id="up" viewBox="0 0 32 32"><use href="#ub"/><path fill="#fff" d="M28 24h-4v4h-2v-4h-4v-2h4v-4h2v4h4z"/></symbol>
<symbol id="um" viewBox="0 0 32 32"><use href="#ub"/><path fill="#fff" d="M28 24H18v-2h10z"/></symbol>
<symbol id="uc" viewBox="0 0 32 32"><use href="#ub"/><path fill="#fff" d="M22.500 29.500l-5-5 2-2 3 3 6-6 2 2z"/></symbol>
<symbol id="ut" viewBox="0 0 32 32"><path d="M10 6a6 6 0 1112 0 6 6 0 01-12 0zM24 14h-1.100l-6.200 12.600L19 15l-3-3-3 3 2.300 11.600L9.100 14H8c-4 0-4 2.700-4 6v10h24V20c0-3.300 0-6-4-6z"/></symbol>
<symbol id="ql" viewBox="0 0 32 32"><path id="qlp" d="M7 14a7 7 0 11-7 7v-1A14 14 0 0114 6v4c-2.700 0-5.200 1-7.100 2.900-.4.400-.7.800-1 1.200.4-.1.700-.1 1.100-.1zM25 14a7 7 0 11-7 7v-1A14 14 0 0132 6v4c-2.700 0-5.200 1-7.100 2.900-.4.400-.7.800-1 1.200.4-.1.700-.1 1.100-.1z"/></symbol>
<symbol id="qq" viewBox="0 0 32 32"><use href="#qlp" transform="rotate(180 16 16)"/></symbol>
<symbol id="hg" viewBox="0 0 32 32"><path d="M4 0h24v3h-2v4c0 4-4 7-7.500 9C22 18 26 21 26 25v4h2v3H4v-3h2v-4c0-4 4-7 7.500-9C10 14 6 11 6 7V3H4zM9 3v4c0 3 4 6 7 8 3-2 7-5 7-8V3zM9 29h14v-4c0-3-4-6-7-8-3 2-7 5-7 8z"/></symbol>
<symbol id="s1" viewBox="0 0 32 32"><circle cx="16" cy="4" r="3.500"/><circle cx="25" cy="7" r="3"/><circle cx="29" cy="16" r="2"/><circle cx="25" cy="25" r="1.500"/><circle cx="16" cy="29" r="2"/><circle cx="7" cy="25" r="2"/><circle cx="3" cy="16" r="2.500"/><circle cx="7" cy="7" r="3.500"/></symbol>
<symbol id="s2" viewBox="0 0 32 32"><path d="M16 0a16 16 0 100 32 16 16 0 000-32zM16 29a11 13 0 110-26 11 13 0 010 26z"/></symbol>
<symbol id="s3" viewBox="0 0 32 32"><path fill="none" stroke="currentColor" stroke-width="2.500" d="M14 16V2M12 16L6 4M10 17L1 8M10 19L0 15M18 14l8-10M20 15l8-5M21 17l10-3M21 20l9 1"/></symbol>
<symbol id="s4" viewBox="0 0 32 32"><circle cx="16" cy="16" r="13" fill="none" stroke="currentColor" stroke-width="6" stroke-dasharray="15 5.400"/></symbol>

<symbol id="t-select" viewBox="0 0 32 32"><path fill-opacity=".75" d="M0 0h28v12h-3V3H3v22h5v3H0z"/><path d="M11 8v24l6-6 5 6 4-2-5-7h9z"/></symbol>
<symbol id="t-trash" viewBox="0 0 32 32"><path d="M12 0h8v3h10v4H2V3h10zM5 9h22l-2 23H7z"/></symbol>
<symbol id="t-move" viewBox="0 0 32 32"><path d="M32 16l-6-6v4h-8V6h4l-6-6-6 6h4v8H6v-4l-6 6 6 6v-4h8v8h-4l6 6 6-6h-4v-8h8v4z"/></symbol>
<symbol id="t-search" viewBox="0 0 32 32"><path d="M31 27.200l-7.600-6.400c-.8-.7-1.600-1-2.300-1a12 12 0 10-1.300 1.300c0 .7.300 1.500 1 2.300l6.400 7.600c1.100 1.200 2.900 1.300 4 .2s1-2.900-.2-4zM12 20a8 8 0 110-16 8 8 0 010 16z"/></symbol>
<symbol id="t-import" viewBox="0 0 32 28"><path d="M16 0l7 8h-5v10h-4V8H9zM0 14h9v4H4v6h24v-6h-5v-4h9v14H0z"/></symbol>
<symbol id="t-image" viewBox="0 0 32 32"><path d="M3 2h26a3 3 0 013 3v22a3 3 0 01-3 3H3a3 3 0 01-3-3V5a3 3 0 013-3zM4 6v20h24V6zM7 24l6-9 5 6 3-2 4 5z"/></symbol>
</svg>

<div class="topline"></div>
<div class="app">
  <div class="main">
    <header class="toolbar">
      <button class="btn menu-btn" type="button"><svg class="bars" viewBox="0 0 14 12"><path d="M0 0h14v3H0zM0 4.500h14v3H0zM0 9h14v3H0z"/></svg></button>
      <button class="btn purple import-btn" type="button"><svg class="ic18"><use href="#t-import"/></svg><span>Import Icons</span></button>
      <button class="btn purple lib-btn" type="button"><svg class="ic20"><use href="#books"/></svg></button>
      <div class="group">
        <button class="btn seg" type="button"><svg class="ic16"><use href="#t-select"/></svg></button>
        <button class="btn seg danger" type="button"><svg class="ic16"><use href="#t-trash"/></svg></button>
        <button class="btn seg" type="button"><svg class="ic16"><use href="#t-move"/></svg></button>
        <button class="btn seg" type="button"><svg class="ic16"><use href="#pen1"/></svg></button>
      </div>
      <label class="search"><svg class="ic16"><use href="#t-search"/></svg><span>search...</span></label>
      <div class="group history">
        <button class="btn seg off" type="button"><svg class="ic16"><use href="#un2"/></svg></button>
        <button class="btn seg off" type="button"><svg class="ic16"><use href="#re2"/></svg></button>
      </div>
      <div class="project"><svg class="ic16"><use href="#stack"/></svg><span>Untitled Project</span></div>
      <svg class="face" viewBox="0 0 32 32"><circle cx="16" cy="16" r="15" fill="none" stroke="#aaa" stroke-width="1.800"/><circle cx="11" cy="11" r="1.500"/><circle cx="21" cy="11" r="1.500"/><path d="M11 21.500h10V23H11z"/></svg>
    </header>

    <section class="set">
      <div class="set-head">
        <h2>Untitled Set</h2>
        <div class="meta"><span class="size">32</span><span class="toggle"></span><svg class="bars gray" viewBox="0 0 14 12"><path d="M0 0h14v3H0zM0 4.500h14v3H0zM0 9h14v3H0z"/></svg></div>
      </div>
      <div class="grid">
        <div class="tile picked"><svg class="i" viewBox="0 0 32 32"><path d="M16 3a13 13 0 110 26 13 13 0 010-26zM15 10v5h-5v2h5v5h2v-5h5v-2h-5v-5z"/></svg></div>
        <div class="tile picked"><svg class="i" viewBox="0 0 32 32"><path fill="none" stroke="currentColor" stroke-width="3" d="M24 1L8 16l16 15"/></svg></div>
        <div class="tile picked"><svg class="i" viewBox="0 0 32 32"><path d="M16 3a13 13 0 110 26 13 13 0 010-26zM14 19l-4.500-4.500-2 2L14 23l11-11-2-2z"/></svg></div>
        <div class="tile picked"><svg class="i" viewBox="0 0 32 32"><path fill="none" stroke="currentColor" stroke-width="2.500" d="M6.500 6.500l19 19m0-19l-19 19"/></svg></div>
        <div class="tile picked"><svg class="i" viewBox="0 0 32 32"><path d="M16 28C8 21 3 17 3 11a7 7 0 0113-3.500A7 7 0 0129 11c0 6-5 10-13 17z"/></svg></div>
        <div class="tile picked"><svg class="i" viewBox="0 0 32 32"><path fill="none" stroke="currentColor" stroke-width="2.500" d="M12 9l8 7-8 7"/></svg></div>
        <div class="tile picked"><svg class="i" viewBox="0 0 32 32"><circle cx="16" cy="16" r="12" fill="none" stroke="currentColor" stroke-width="2.500"/><path d="M10 14.750h12v2.500H10z"/></svg></div>
        <div class="tile picked"><svg class="i" viewBox="0 0 32 32"><path d="M1 2h4l1 4h23l-4 11H10l-1 3h19v2H6l2-5L4.500 4H1zM10 24a2.500 2.500 0 110 5 2.500 2.500 0 010-5zM24 24a2.500 2.500 0 110 5 2.500 2.500 0 010-5z"/></svg></div>
        <div class="tile picked"><svg class="i" viewBox="0 0 32 32"><path d="M25 3h6v17h-6zM9 3h14v17l-7 10.500-1.500-1 1-9.500H4c-2 0-3-1-3-3l4-11c.5-2 2-3 4-3z"/></svg></div>
        <div class="tile picked"><svg class="i" viewBox="0 0 32 32"><path d="M1 11h6v17H1zM9 11l7-10 2 1-1 8h11c2 0 3 1 3 3l-4 11c-.5 2-2 4-4 4H9z"/></svg></div>
      </div>
    </section>

    <section class="set">
      <div class="set-head">
        <h2>IcoMoon - Free</h2>
        <div class="meta"><span class="size">32</span><span class="toggle"></span><svg class="bars gray" viewBox="0 0 14 12"><path d="M0 0h14v3H0zM0 4.500h14v3H0zM0 9h14v3H0z"/></svg></div>
      </div>
      <div class="grid">
        <div class="tile"><svg class="i"><use href="#home"/></svg></div>
        <div class="tile"><svg class="i"><use href="#home2"/></svg></div>
        <div class="tile"><svg class="i"><use href="#home3"/></svg></div>
        <div class="tile"><svg class="i"><use href="#office"/></svg></div>
        <div class="tile"><svg class="i"><use href="#news"/></svg></div>
        <div class="tile"><svg class="i"><use href="#pen1"/></svg></div>
        <div class="tile"><svg class="i"><use href="#pen2"/></svg></div>
        <div class="tile"><svg class="i"><use href="#quill"/></svg></div>
        <div class="tile"><svg class="i"><use href="#pen"/></svg></div>
        <div class="tile"><svg class="i"><use href="#blog"/></svg></div>
        <div class="tile"><svg class="i"><use href="#eye"/></svg></div>
        <div class="tile"><svg class="i"><use href="#droplet"/></svg></div>
        <div class="tile"><svg class="i"><use href="#paint"/></svg></div>
        <div class="tile"><svg class="i"><use href="#image"/></svg></div>
        <div class="tile"><svg class="i w36"><use href="#images"/></svg></div>
        <div class="tile"><svg class="i"><use href="#camera"/></svg></div>
        <div class="tile"><svg class="i"><use href="#phones"/></svg></div>
        <div class="tile"><svg class="i"><use href="#music"/></svg></div>

        <div class="tile"><svg class="i"><use href="#play"/></svg></div>
        <div class="tile"><svg class="i"><use href="#film"/></svg></div>
        <div class="tile"><svg class="i"><use href="#video"/></svg></div>
        <div class="tile"><svg class="i"><use href="#dice"/></svg></div>
        <div class="tile"><svg class="i"><use href="#pac"/></svg></div>
        <div class="tile"><svg class="i"><use href="#spade"/></svg></div>
        <div class="tile"><svg class="i"><use href="#club"/></svg></div>
        <div class="tile"><svg class="i"><use href="#diamond"/></svg></div>
        <div class="tile"><svg class="i"><use href="#horn"/></svg></div>
        <div class="tile"><svg class="i w40"><use href="#wifi"/></svg></div>
        <div class="tile"><svg class="i"><use href="#pod"/></svg></div>
        <div class="tile"><svg class="i"><use href="#feed"/></svg></div>
        <div class="tile focus"><svg class="i"><use href="#mic"/></svg></div>
        <div class="tile"><svg class="i"><use href="#book"/></svg></div>
        <div class="tile"><svg class="i w36"><use href="#books"/></svg></div>
        <div class="tile"><svg class="i w34"><use href="#lib"/></svg></div>
        <div class="tile"><svg class="i"><use href="#ftext"/></svg></div>
        <div class="tile"><svg class="i"><use href="#profile"/></svg></div>

        <div class="tile"><svg class="i"><use href="#fe"/></svg></div>
        <div class="tile"><svg class="i"><use href="#fes"/></svg></div>
        <div class="tile"><svg class="i"><use href="#ft"/></svg></div>
        <div class="tile"><svg class="i"><use href="#fp"/></svg></div>
        <div class="tile"><svg class="i"><use href="#fm"/></svg></div>
        <div class="tile"><svg class="i"><use href="#fpl"/></svg></div>
        <div class="tile"><svg class="i"><use href="#fv"/></svg></div>
        <div class="tile"><svg class="i"><use href="#fz"/></svg></div>
        <div class="tile"><svg class="i"><use href="#copy"/></svg></div>
        <div class="tile"><svg class="i"><use href="#paste"/></svg></div>
        <div class="tile"><svg class="i"><use href="#stack"/></svg></div>
        <div class="tile"><svg class="i"><use href="#fo"/></svg></div>
        <div class="tile"><svg class="i"><use href="#foo"/></svg></div>
        <div class="tile"><svg class="i"><use href="#fop2"/></svg></div>
        <div class="tile"><svg class="i"><use href="#fom"/></svg></div>
        <div class="tile"><svg class="i"><use href="#fod"/></svg></div>
        <div class="tile"><svg class="i"><use href="#fou"/></svg></div>
        <div class="tile"><svg class="i"><use href="#tag"/></svg></div>

        <div class="tile"><svg class="i w40"><use href="#tags"/></svg></div>
        <div class="tile"><svg class="i"><use href="#bar"/></svg></div>
        <div class="tile"><svg class="i"><use href="#qrc"/></svg></div>
        <div class="tile"><svg class="i"><use href="#ticket"/></svg></div>
        <div class="tile"><svg class="i"><use href="#cart"/></svg></div>
        <div class="tile"><svg class="i"><use href="#cd"/></svg></div>
        <div class="tile"><svg class="i"><use href="#ce"/></svg></div>
        <div class="tile"><svg class="i"><use href="#cp"/></svg></div>
        <div class="tile"><svg class="i"><use href="#cy"/></svg></div>
        <div class="tile"><svg class="i"><use href="#card"/></svg></div>
        <div class="tile"><svg class="i"><use href="#calc"/></svg></div>
        <div class="tile"><svg class="i"><use href="#life"/></svg></div>
        <div class="tile"><svg class="i"><use href="#phone"/></svg></div>
        <div class="tile"><svg class="i"><use href="#hang"/></svg></div>
        <div class="tile"><svg class="i"><use href="#addr"/></svg></div>
        <div class="tile"><svg class="i"><use href="#env"/></svg></div>
        <div class="tile"><svg class="i"><use href="#pin"/></svg></div>
        <div class="tile"><svg class="i"><use href="#loc"/></svg></div>

        <div class="tile"><svg class="i"><use href="#loc2"/></svg></div>
        <div class="tile"><svg class="i"><use href="#nav"/></svg></div>
        <div class="tile"><svg class="i"><use href="#comp"/></svg></div>
        <div class="tile"><svg class="i"><use href="#map"/></svg></div>
        <div class="tile"><svg class="i"><use href="#map2"/></svg></div>
        <div class="tile"><svg class="i"><use href="#hist"/></svg></div>
        <div class="tile"><svg class="i"><use href="#clock"/></svg></div>
        <div class="tile"><svg class="i"><use href="#clock2"/></svg></div>
        <div class="tile"><svg class="i"><use href="#alarm"/></svg></div>
        <div class="tile"><svg class="i"><use href="#bell"/></svg></div>
        <div class="tile"><svg class="i"><use href="#watch"/></svg></div>
        <div class="tile"><svg class="i"><use href="#cal"/></svg></div>
        <div class="tile"><svg class="i"><use href="#print"/></svg></div>
        <div class="tile"><svg class="i w36"><use href="#kb"/></svg></div>
        <div class="tile"><svg class="i"><use href="#disp"/></svg></div>
        <div class="tile"><svg class="i"><use href="#lap"/></svg></div>
        <div class="tile"><svg class="i"><use href="#mob"/></svg></div>
        <div class="tile"><svg class="i"><use href="#mob2"/></svg></div>

        <div class="tile"><svg class="i"><use href="#tab"/></svg></div>
        <div class="tile"><svg class="i"><use href="#tv"/></svg></div>
        <div class="tile"><svg class="i"><use href="#dr"/></svg></div>
        <div class="tile"><svg class="i"><use href="#dr2"/></svg></div>
        <div class="tile"><svg class="i"><use href="#ba"/></svg></div>
        <div class="tile"><svg class="i"><use href="#br"/></svg></div>
        <div class="tile"><svg class="i"><use href="#dl"/></svg></div>
        <div class="tile"><svg class="i"><use href="#ul"/></svg></div>
        <div class="tile"><svg class="i"><use href="#fl"/></svg></div>
        <div class="tile"><svg class="i"><use href="#drive"/></svg></div>
        <div class="tile"><svg class="i"><use href="#db"/></svg></div>
        <div class="tile"><svg class="i"><use href="#un"/></svg></div>
        <div class="tile"><svg class="i"><use href="#re"/></svg></div>
        <div class="tile"><svg class="i"><use href="#un2"/></svg></div>
        <div class="tile"><svg class="i"><use href="#re2"/></svg></div>
        <div class="tile"><svg class="i"><use href="#fw"/></svg></div>
        <div class="tile"><svg class="i"><use href="#rep"/></svg></div>
        <div class="tile"><svg class="i"><use href="#bub"/></svg></div>

        <div class="tile"><svg class="i"><use href="#bs"/></svg></div>
        <div class="tile"><svg class="i"><use href="#bs2"/></svg></div>
        <div class="tile"><svg class="i"><use href="#b2"/></svg></div>
        <div class="tile"><svg class="i"><use href="#bs3"/></svg></div>
        <div class="tile"><svg class="i"><use href="#bs4"/></svg></div>
        <div class="tile"><svg class="i"><use href="#u"/></svg></div>
        <div class="tile"><svg class="i"><use href="#us"/></svg></div>
        <div class="tile"><svg class="i"><use href="#up"/></svg></div>
        <div class="tile"><svg class="i"><use href="#um"/></svg></div>
        <div class="tile"><svg class="i"><use href="#uc"/></svg></div>
        <div class="tile"><svg class="i"><use href="#ut"/></svg></div>
        <div class="tile"><svg class="i"><use href="#ql"/></svg></div>
        <div class="tile"><svg class="i"><use href="#qq"/></svg></div>
        <div class="tile"><svg class="i"><use href="#hg"/></svg></div>
        <div class="tile"><svg class="i"><use href="#s1"/></svg></div>
        <div class="tile"><svg class="i"><use href="#s2"/></svg></div>
        <div class="tile"><svg class="i"><use href="#s3"/></svg></div>
        <div class="tile"><svg class="i"><use href="#s4"/></svg></div>
      </div>
    </section>

    <footer class="bar">
      <div class="bar-inner">
        <div class="cell side"><svg class="ic16 dark"><use href="#t-image"/></svg><span>Generate SVG &amp; More</span></div>
        <div class="cell mid"><span>Selection (10)</span></div>
        <div class="cell side font-cell"><span>Generate Font</span><span class="fmark">ℱ</span></div>
      </div>
    </footer>
  </div>
  <div class="scrollbar">
    <span class="arrow up"></span>
    <span class="thumb"></span>
    <span class="arrow down"></span>
  </div>
</div>

<svg class="annot" viewBox="0 0 1920 939" aria-hidden="true">
  <path d="M998 250l19-2 1 5 131 49-134-43-3 4z"/>
  <path d="M1590 877l1-17 3 1 123-188-117 193 4 1z"/>
</svg>
</body>
</html>
```

FILE: styles.css
```css
* { box-sizing: border-box; }

html, body {
  margin: 0;
  height: 939px;
  overflow: hidden;
}

body {
  background: #f0f0f0;
  color: #444;
  font-family: Lato, "Open Sans", "Liberation Sans", sans-serif;
  position: relative;
}

.sprite { position: absolute; width: 0; height: 0; overflow: hidden; }

.topline {
  height: 3px;
  background: #fff;
  border-bottom: 1px solid #b5b5b5;
}

.app { display: flex; height: 936px; }

.main {
  flex: 1;
  min-width: 0;
  position: relative;
  overflow: hidden;
}

/* toolbar */
.toolbar {
  height: 56px;
  background: #fff;
  box-shadow: 0 1px 6px rgba(0, 0, 0, .2);
  display: flex;
  align-items: center;
  padding: 0 11px 0 12px;
  position: relative;
  z-index: 2;
}

.btn {
  border: 0;
  border-bottom: 2px solid #bdbdbd;
  border-radius: 3px;
  background: #ddd;
  color: #666;
  height: 32px;
  width: 40px;
  padding: 0;
  display: flex;
  align-items: center;
  justify-content: center;
  font: inherit;
}

.menu-btn { margin-right: 103px; }
.purple { background: #835692; border-bottom-color: #744a82; color: #fff; }
.import-btn { width: 144px; gap: 9px; font-size: 16.600px; margin-right: 8px; padding-right: 1px; }
.lib-btn { margin-right: 24px; }

.group { display: flex; margin-right: 24px; border-radius: 3px; overflow: hidden; }
.seg { border-radius: 0; }
.danger { background: #e94e3d; color: #fff; border-top: 2px solid #cf4334; border-bottom-color: #e94e3d; }
.off { background: #efefef; border-bottom-color: #e6e6e6; color: #bbb; }
.history { margin-right: 0; }

.search {
  width: 192px;
  height: 32px;
  margin-right: 24px;
  background: #f0f0f0;
  border: 2px solid #e6e6e6;
  border-radius: 3px;
  display: flex;
  align-items: center;
  gap: 8px;
  padding-left: 6px;
  color: #666;
  font-size: 16px;
}
.search span { color: #a5a5a5; }

.project {
  margin-left: auto;
  margin-right: 120px;
  display: flex;
  align-items: center;
  gap: 4px;
  color: #888;
  font-size: 16.700px;
}

.face { width: 32px; height: 32px; fill: #aaa; }

.ic16 { width: 16px; height: 16px; fill: currentColor; fill-rule: evenodd; flex: none; }
.ic18 { width: 18px; height: 16px; fill: currentColor; fill-rule: evenodd; flex: none; }
.ic20 { width: 20px; height: 18px; fill: currentColor; fill-rule: evenodd; flex: none; }
.bars { width: 14px; height: 12px; fill: #555; }
.bars.gray { width: 15px; height: 11px; fill: #888; }
.dark { color: #111; }

/* icon sets */
.set { width: 1593px; margin: 36px 0 0 155px; }
.set + .set { margin-top: 48px; }

.set-head {
  height: 51px;
  border-bottom: 1px solid #d2d2d2;
  display: flex;
  justify-content: space-between;
  align-items: flex-start;
}

.set-head h2 {
  margin: 0;
  font-size: 31.500px;
  font-weight: 300;
  line-height: 40px;
  color: #444;
}

.meta {
  display: flex;
  align-items: center;
  margin-top: 26px;
  height: 18px;
}

.size { color: #aaa; font-size: 17px; font-weight: 300; margin-right: 29px; padding-top: 1px; }

.toggle {
  width: 26px;
  height: 14px;
  border-radius: 7px;
  background: #835692;
  margin-right: 25px;
  position: relative;
}
.toggle::after {
  content: "";
  position: absolute;
  right: 3px;
  top: 2px;
  width: 8px;
  height: 10px;
  background: #fff;
  border-radius: 50%;
}

.grid {
  display: grid;
  grid-template-columns: repeat(18, 72px);
  gap: 12px;
  margin-top: 25px;
}

.tile {
  width: 72px;
  height: 72px;
  border-radius: 5px;
  background: #ddd;
  display: flex;
  align-items: center;
  justify-content: center;
}
.tile.picked { background: #fff; border: 3px solid #ffb74d; }
.tile.focus { border: 3px solid #e94e3d; }

.i {
  width: 32px;
  height: 32px;
  flex: none;
  color: #444;
  fill: currentColor;
  fill-rule: evenodd;
}
.w34 { width: 34px; }
.w36 { width: 36px; }
.w40 { width: 40px; }

/* bottom bar */
.bar {
  position: absolute;
  left: 0;
  right: 0;
  bottom: 0;
  height: 55px;
  background: rgba(255, 255, 255, .935);
  box-shadow: 0 0 12px rgba(0, 0, 0, .22);
  z-index: 2;
  padding: 3px 0 0 155px;
}

.bar-inner { width: 1593px; height: 52px; display: flex; }

.cell {
  flex: 1;
  display: flex;
  align-items: center;
  justify-content: center;
  gap: 8px;
  color: #333;
  font-size: 16px;
  padding-bottom: 6px;
}

.side { margin-top: 3px; }
.side:first-child { border-left: 1px solid #bbb; }
.side:last-child { border-right: 1px solid #bbb; }

.mid { border-top: 4px solid #ffb74d; position: relative; font-size: 16.600px; }
.mid::before,
.mid::after {
  content: "";
  position: absolute;
  top: 0;
  width: 15px;
  height: 46px;
  background: #bbb;
}
.mid::before { left: -15px; clip-path: polygon(100% 0, 0 48%, 100% 100%, 50% 48%); }
.mid::after { right: -15px; clip-path: polygon(0 0, 100% 48%, 0 100%, 50% 48%); }

.font-cell { font-size: 16.500px; gap: 10px; }

.fmark {
  font-family: "DejaVu Serif", "DejaVu Sans", "Liberation Serif", serif;
  font-weight: 700;
  font-size: 20px;
  line-height: 1;
  color: #111;
}

/* fake scrollbar */
.scrollbar {
  width: 17px;
  background: #f1f1f1;
  display: flex;
  flex-direction: column;
  align-items: center;
}
.arrow { width: 0; height: 0; border: 4px solid transparent; flex: none; }
.arrow.up { border-bottom: 5px solid #666; border-top: 0; margin-top: 6px; }
.arrow.down { border-top: 5px solid #666; border-bottom: 0; margin-top: auto; margin-bottom: 6px; }
.thumb { width: 13px; height: 293px; background: #c1c1c1; margin-top: 6px; flex: none; }

/* hand-drawn annotation arrows over the screenshot */
.annot {
  position: absolute;
  left: 0;
  top: 0;
  width: 1920px;
  height: 939px;
  fill: #ff3b3b;
  z-index: 5;
  pointer-events: none;
}
```
